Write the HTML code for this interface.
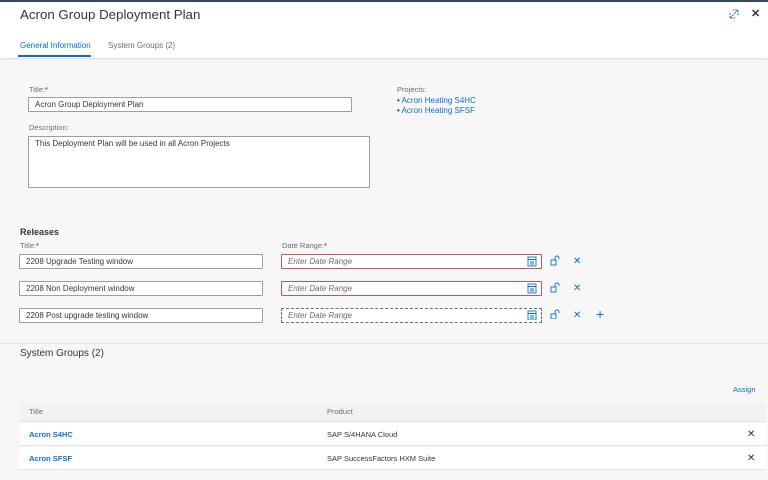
<!DOCTYPE html>
<html><head><style>
*{margin:0;padding:0;box-sizing:border-box}
body{width:768px;height:480px;overflow:hidden;background:#f7f7f7;font-family:"Liberation Sans",sans-serif;color:#32363a;position:relative}
.a{position:absolute;white-space:nowrap}
.inp{position:absolute;background:#fff;border:1px solid #9a9fa5;border-radius:1px;font-size:8px;padding-left:6px;line-height:13px}
.lbl{font-size:7.5px;color:#6a6d70}
.req{color:#bb0000}
.link{color:#0a6ed1;font-size:8px}
.ic{position:absolute;color:#0a6ed1;font-size:11px;line-height:11px}
</style></head><body>
<div class="a" style="left:0;top:0;width:768px;height:2px;background:#354a5f"></div>
<div class="a" style="left:0;top:2px;width:768px;height:56px;background:#fff;box-shadow:0 1px 2px rgba(0,0,0,.12)"></div>
<div class="a" style="left:20px;top:7px;font-size:13.3px;color:#32363a">Acron Group Deployment Plan</div>
<svg class="a" style="left:729px;top:9px" width="10" height="10" viewBox="0 0 10 10" fill="none" stroke="#0a6ed1" stroke-width="0.9"><path d="M1 4V9H6M9 6V1H4M9 1L5.5 4.5M1 9L4.5 5.5" stroke-dasharray="2 1"/></svg>
<div class="ic" style="left:751px;top:9px;font-size:11px;color:#32363a;font-weight:bold">✕</div>
<div class="a" style="left:20px;top:41px;font-size:8px;color:#0a6ed1">General Information</div>
<div class="a" style="left:18px;top:55px;width:73px;height:2px;background:#0a6ed1"></div>
<div class="a" style="left:108px;top:41px;font-size:8px;color:#6a6d70">System Groups (2)</div>

<div class="a lbl" style="left:29px;top:85px">Title:<span class="req">*</span></div>
<div class="inp" style="left:28px;top:97px;width:324px;height:15px;color:#32363a">Acron Group Deployment Plan</div>
<div class="a lbl" style="left:29px;top:123px">Description:</div>
<div class="inp" style="left:28px;top:136px;width:342px;height:52px;line-height:12px;padding-top:1px">This Deployment Plan will be used in all Acron Projects</div>
<div class="a lbl" style="left:397px;top:85px">Projects:</div>
<div class="a" style="left:397px;top:96px;font-size:8px;line-height:9.5px"><span style="color:#32363a">•</span> <span class="link">Acron Heating S4HC</span><br><span style="color:#32363a">•</span> <span class="link">Acron Heating SFSF</span></div>

<div class="a" style="left:20px;top:227px;font-size:9px;font-weight:bold">Releases</div>
<div class="a lbl" style="left:20px;top:241px">Title:<span class="req">*</span></div>
<div class="a lbl" style="left:282px;top:241px">Date Range:<span class="req">*</span></div>

<div class="inp" style="left:19px;top:254px;width:244px;height:15px">2208 Upgrade Testing window</div>
<div class="inp" style="left:281px;top:254px;width:261px;height:15px;border-color:#c25555;color:#6a6d70;font-style:italic">Enter Date Range</div>
<div class="inp" style="left:19px;top:281px;width:244px;height:15px">2208 Non Deployment window</div>
<div class="inp" style="left:281px;top:281px;width:261px;height:15px;border-color:#c25555;color:#6a6d70;font-style:italic">Enter Date Range</div>
<div class="inp" style="left:19px;top:308px;width:244px;height:15px">2208 Post upgrade testing window</div>
<div class="inp" style="left:281px;top:308px;width:261px;height:15px;border:1px dashed #6a6d70;color:#6a6d70;font-style:italic">Enter Date Range</div>

<svg class="a" style="left:527px;top:256px" width="10" height="64" viewBox="0 0 10 64" fill="none" stroke="#0a6ed1" stroke-width="0.9">
<g><rect x="1" y="1" width="8" height="9"/><path d="M1 3.5H9M3 6H7M3 8H7"/></g>
<g transform="translate(0,27)"><rect x="1" y="1" width="8" height="9"/><path d="M1 3.5H9M3 6H7M3 8H7"/></g>
<g transform="translate(0,54)"><rect x="1" y="1" width="8" height="9"/><path d="M1 3.5H9M3 6H7M3 8H7"/></g>
</svg>
<svg class="a" style="left:550px;top:255px" width="11" height="64" viewBox="0 0 11 64" fill="none" stroke="#0a6ed1" stroke-width="0.9">
<g><rect x="1" y="5" width="5" height="5"/><path d="M5 5V3a2 2 0 0 1 4 0v1"/></g>
<g transform="translate(0,27)"><rect x="1" y="5" width="5" height="5"/><path d="M5 5V3a2 2 0 0 1 4 0v1"/></g>
<g transform="translate(0,54)"><rect x="1" y="5" width="5" height="5"/><path d="M5 5V3a2 2 0 0 1 4 0v1"/></g>
</svg>
<div class="ic" style="left:573px;top:256px;font-size:10px">✕</div>
<div class="ic" style="left:573px;top:283px;font-size:10px">✕</div>
<div class="ic" style="left:573px;top:310px;font-size:10px">✕</div>
<div class="ic" style="left:596px;top:309px;font-size:14px">+</div>

<div class="a" style="left:0;top:343px;width:768px;height:1px;background:#e5e5e5"></div>
<div class="a" style="left:20px;top:348px;font-size:10px">System Groups (2)</div>
<div class="a link" style="left:733px;top:385px;font-size:7.5px">Assign</div>
<div class="a" style="left:19px;top:402px;width:747px;height:20px;background:#f2f2f2;border-bottom:1px solid #e5e5e5"></div>
<div class="a lbl" style="left:29px;top:407px">Title</div>
<div class="a lbl" style="left:327px;top:407px">Product</div>
<div class="a" style="left:19px;top:423px;width:747px;height:23px;background:#fff;border-bottom:1px solid #e5e5e5"></div>
<div class="a" style="left:19px;top:447px;width:747px;height:23px;background:#fff;border-bottom:1px solid #e5e5e5"></div>
<div class="a link" style="left:29px;top:430px;font-weight:bold;font-size:7.5px">Acron S4HC</div>
<div class="a" style="left:327px;top:430px;font-size:7.5px">SAP S/4HANA Cloud</div>
<div class="ic" style="left:747px;top:429px;font-size:10px;color:#32363a">✕</div>
<div class="a link" style="left:29px;top:454px;font-weight:bold;font-size:7.5px">Acron SFSF</div>
<div class="a" style="left:327px;top:454px;font-size:7.5px">SAP SuccessFactors HXM Suite</div>
<div class="ic" style="left:747px;top:453px;font-size:10px;color:#32363a">✕</div>
</body></html>
